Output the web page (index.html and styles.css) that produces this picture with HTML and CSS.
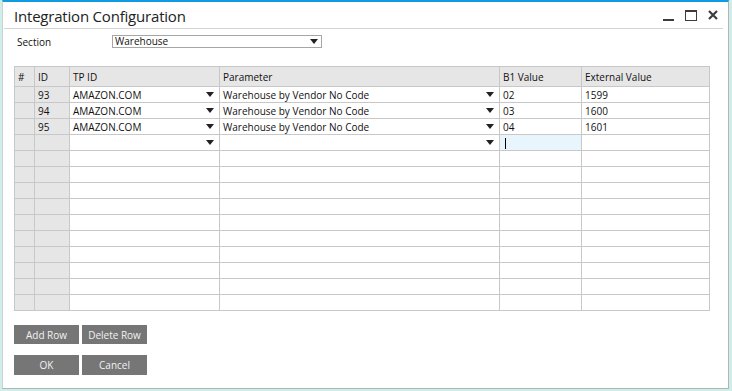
FILE: index.html
```html
<!DOCTYPE html>
<html lang="en">
<head>
  <meta charset="UTF-8">
  <title>Integration Configuration</title>
  <link rel="stylesheet" href="styles.css">
</head>
<body>
  <div class="window">
    <div class="titlebar">
      <div class="title">Integration Configuration</div>
      <div class="win-buttons">
        <span class="btn-min"></span>
        <span class="btn-max"></span>
        <svg class="btn-close" width="10" height="10" viewBox="0 0 10 10">
          <path d="M1 1 L9 9 M9 1 L1 9" stroke="#3c3c3c" stroke-width="2.2"/>
        </svg>
      </div>
    </div>

    <div class="section-row">
      <label class="section-label">Section</label>
      <div class="combo">
        <span>Warehouse</span>
        <span class="arrow"></span>
      </div>
    </div>

    <table class="grid">
      <colgroup>
        <col class="c-num"><col class="c-id"><col class="c-tp"><col class="c-param"><col class="c-b1"><col class="c-ext">
      </colgroup>
      <thead>
        <tr><th>#</th><th>ID</th><th>TP ID</th><th>Parameter</th><th>B1 Value</th><th>External Value</th></tr>
      </thead>
      <tbody>
        <tr><td class="ro"></td><td class="ro">93</td><td class="dd">AMAZON.COM<span class="arrow"></span></td><td class="dd">Warehouse by Vendor No Code<span class="arrow"></span></td><td>02</td><td>1599</td></tr>
        <tr><td class="ro"></td><td class="ro">94</td><td class="dd">AMAZON.COM<span class="arrow"></span></td><td class="dd">Warehouse by Vendor No Code<span class="arrow"></span></td><td>03</td><td>1600</td></tr>
        <tr><td class="ro"></td><td class="ro">95</td><td class="dd">AMAZON.COM<span class="arrow"></span></td><td class="dd">Warehouse by Vendor No Code<span class="arrow"></span></td><td>04</td><td>1601</td></tr>
        <tr><td class="ro"></td><td class="ro"></td><td class="dd"><span class="arrow"></span></td><td class="dd"><span class="arrow"></span></td><td class="active"><span class="caret"></span></td><td></td></tr>
        <tr><td class="ro"></td><td class="ro"></td><td></td><td></td><td></td><td></td></tr>
        <tr><td class="ro"></td><td class="ro"></td><td></td><td></td><td></td><td></td></tr>
        <tr><td class="ro"></td><td class="ro"></td><td></td><td></td><td></td><td></td></tr>
        <tr><td class="ro"></td><td class="ro"></td><td></td><td></td><td></td><td></td></tr>
        <tr><td class="ro"></td><td class="ro"></td><td></td><td></td><td></td><td></td></tr>
        <tr><td class="ro"></td><td class="ro"></td><td></td><td></td><td></td><td></td></tr>
        <tr><td class="ro"></td><td class="ro"></td><td></td><td></td><td></td><td></td></tr>
        <tr><td class="ro"></td><td class="ro"></td><td></td><td></td><td></td><td></td></tr>
        <tr><td class="ro"></td><td class="ro"></td><td></td><td></td><td></td><td></td></tr>
        <tr><td class="ro"></td><td class="ro"></td><td></td><td></td><td></td><td></td></tr>
      </tbody>
    </table>

    <div class="button-row first">
      <button>Add Row</button>
      <button>Delete Row</button>
    </div>
    <div class="button-row">
      <button>OK</button>
      <button>Cancel</button>
    </div>
  </div>
</body>
</html>
```

FILE: styles.css
```css
/* reset */
*, *::before, *::after {
  box-sizing: border-box;
}
html, body {
  margin: 0;
  padding: 0;
  background-color: #cdeee9;
  font-family: "Open Sans", "Noto Sans", sans-serif;
  color: #111;
}

/* ablak */
.window {
  margin-left: 2px;
  width: 727px;
  height: 389px;
  background-color: #fff;
  border: 1px solid #b4b4b4;
  border-top: 2px solid #0f9be2;
  border-left-color: #d0d0d0;
  padding: 0 0 0 11px;
}

/* címsor */
.titlebar {
  display: flex;
  align-items: center;
  justify-content: space-between;
  height: 27px;
  margin-right: 5px;
  margin-left: -10px;
  padding-left: 10px;
  border-bottom: 1px solid #d4d4d4;
}
.title {
  font-size: 15px;
  letter-spacing: -0.2px;
  color: #222;
  margin-top: 2px;
}
.win-buttons {
  display: flex;
  align-items: center;
  gap: 11px;
  padding-right: 5px;
}
.btn-min {
  width: 11px;
  height: 2px;
  background-color: #3c3c3c;
  margin-top: 10px;
}
.btn-max {
  width: 12px;
  height: 11px;
  border: 1px solid #3c3c3c;
  border-top-width: 2px;
}
.btn-close {
  display: block;
}

/* szekció választó */
.section-row {
  display: flex;
  align-items: center;
  margin-top: 6px;
  height: 13px;
  font-size: 10px;
}
.section-label {
  width: 98px;
  padding-left: 3px;
}
.combo {
  position: relative;
  width: 210px;
  height: 13px;
  border: 1px solid #a6a6a6;
  padding-left: 2px;
  line-height: 11px;
}
.combo .arrow {
  right: 3px;
  top: 3px;
}

/* táblázat */
.grid {
  margin-top: 18px;
  border-collapse: collapse;
  table-layout: fixed;
  width: 695px;
  font-size: 10px;
}
.c-num { width: 20px; }
.c-id { width: 35px; }
.c-tp { width: 150px; }
.c-param { width: 280px; }
.c-b1 { width: 82px; }
.c-ext { width: 128px; }

.grid th,
.grid td {
  border: 1px solid #c8c8c8;
  padding: 0 3px;
  text-align: left;
  font-weight: normal;
  white-space: nowrap;
  overflow: hidden;
}
.grid th {
  height: 20px;
  background-color: #e6e6e6;
}
.grid td {
  height: 16px;
  line-height: 14px;
}
.grid td.ro {
  background-color: #e6e6e6;
}
.grid td.dd {
  position: relative;
}
.grid td.active {
  background-color: #e8f5fd;
}
.caret {
  display: inline-block;
  width: 1px;
  height: 11px;
  background-color: #000;
  vertical-align: middle;
  margin-left: 2px;
}

/* lenyíló nyíl */
.arrow {
  position: absolute;
  right: 5px;
  top: 5px;
  width: 0;
  height: 0;
  border-left: 4px solid transparent;
  border-right: 4px solid transparent;
  border-top: 5px solid #222;
}

/* gombok */
.button-row {
  display: flex;
  gap: 3px;
  margin-top: 11px;
}
.button-row.first {
  margin-top: 14px;
}
.button-row button {
  width: 65px;
  height: 19px;
  border: none;
  background-color: #767676;
  color: #f2f2f2;
  font-family: "Open Sans", "Noto Sans", sans-serif;
  font-size: 10px;
  padding: 0;
  cursor: pointer;
}
.button-row:last-child button {
  height: 20px;
}
```
